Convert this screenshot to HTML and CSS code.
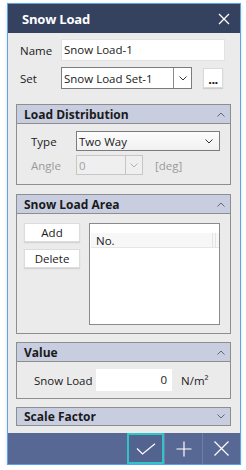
FILE: index.html
```html
<!DOCTYPE html>
<html>
<head>
<meta charset="utf-8">
<link rel="stylesheet" href="styles.css">
</head>
<body>
<div class="window">
  <div class="titlebar">
    <span class="title">Snow Load</span>
    <svg class="close" width="12" height="12" viewBox="0 0 12 12"><path d="M1 1L11 11M11 1L1 11" stroke="#fff" stroke-width="1.3" fill="none"/></svg>
  </div>
  <div class="content">
    <div class="row name-row">
      <span class="lbl">Name</span>
      <div class="textbox">Snow Load-1</div>
    </div>
    <div class="row set-row">
      <span class="lbl">Set</span>
      <div class="combo set-combo"><span class="combo-text">Snow Load Set-1</span><span class="combo-btn"><svg width="8" height="5" viewBox="0 0 8 5"><path d="M0.5 0.5L4 4L7.5 0.5" stroke="#333" fill="none"/></svg></span></div>
      <div class="dots">...</div>
    </div>

    <div class="panel">
      <div class="phead"><span>Load Distribution</span><svg class="chev" width="8" height="5" viewBox="0 0 8 5"><path d="M0.5 4.5L4 1L7.5 4.5" stroke="#666" fill="none"/></svg></div>
      <div class="pbody dist">
        <div class="drow">
          <span class="dlbl">Type</span>
          <div class="combo type-combo"><span class="combo-text">Two Way</span><svg class="arrow" width="8" height="5" viewBox="0 0 8 5"><path d="M0.5 0.5L4 4L7.5 0.5" stroke="#333" fill="none"/></svg></div>
        </div>
        <div class="drow">
          <span class="dlbl dis">Angle</span>
          <div class="combo angle-combo"><span class="combo-text">0</span><span class="combo-btn dbtn"><svg width="8" height="5" viewBox="0 0 8 5"><path d="M0.5 0.5L4 4L7.5 0.5" stroke="#b0b0b0" fill="none"/></svg></span></div>
          <span class="unit dis">[deg]</span>
        </div>
      </div>
    </div>

    <div class="panel">
      <div class="phead"><span>Snow Load Area</span><svg class="chev" width="8" height="5" viewBox="0 0 8 5"><path d="M0.5 4.5L4 1L7.5 4.5" stroke="#666" fill="none"/></svg></div>
      <div class="pbody area">
        <div class="btns">
          <div class="btn">Add</div>
          <div class="btn">Delete</div>
        </div>
        <div class="list">
          <div class="lhead"><span class="lcol">No.</span><span class="lrest"></span></div>
        </div>
      </div>
    </div>

    <div class="panel">
      <div class="phead"><span>Value</span><svg class="chev" width="8" height="5" viewBox="0 0 8 5"><path d="M0.5 4.5L4 1L7.5 4.5" stroke="#666" fill="none"/></svg></div>
      <div class="pbody val">
        <span class="vlbl">Snow Load</span>
        <div class="numbox">0</div>
        <span class="unit">N/m²</span>
      </div>
    </div>

    <div class="panel collapsed">
      <div class="phead"><span>Scale Factor</span><svg class="chev" width="8" height="5" viewBox="0 0 8 5"><path d="M0.5 0.5L4 4L7.5 0.5" stroke="#666" fill="none"/></svg></div>
    </div>
  </div>
  <div class="footer">
    <div class="fbtn ok"><svg width="20" height="12" viewBox="0 0 20 12"><path d="M1 5.5L6.5 11L19 0.8" stroke="#fff" stroke-width="1.2" fill="none"/></svg></div>
    <div class="fbtn"><svg width="16" height="16" viewBox="0 0 16 16"><path d="M8 0.5V15.5M0.5 8H15.5" stroke="#fff" stroke-width="1.2" fill="none"/></svg></div>
    <div class="fbtn last"><svg width="15" height="15" viewBox="0 0 15 15"><path d="M0.5 0.5L14.5 14.5M14.5 0.5L0.5 14.5" stroke="#fff" stroke-width="1.2" fill="none"/></svg></div>
  </div>
</div>
</body>
</html>
```
FILE: styles.css
```css
* { box-sizing: border-box; }
body {
  margin: 0;
  background: #ffffff;
  font-family: "Open Sans", "Noto Sans", sans-serif;
  font-size: 11.5px;
  color: #1a1a1a;
}
.window {
  margin: 3px 0 0 7px;
  width: 234px;
  height: 462px;
  border: 1px solid #5aa2ec;
  display: flex;
  flex-direction: column;
  box-shadow: 0 1px 4px rgba(0,0,0,0.12);
}
.titlebar {
  height: 29px;
  background: #34415f;
  color: #fff;
  display: flex;
  align-items: center;
  justify-content: space-between;
  padding: 0 10px 0 14px;
  flex: none;
}
.title { font-weight: bold; font-size: 13px; letter-spacing: -0.2px; }
.close { display: block; }
.content {
  flex: 1;
  background: #ebebeb;
  padding: 6px 8px 0 8px;
  display: flex;
  flex-direction: column;
}
.row { display: flex; align-items: center; }
.lbl { width: 45px; padding-left: 4px; }
.name-row { height: 22px; }
.set-row { height: 22px; margin-top: 6px; }
.textbox {
  width: 164px;
  height: 22px;
  background: #fff;
  border: 1px solid #e2e2e2;
  padding: 0 0 0 2px;
  line-height: 20px;
}
.combo {
  display: flex;
  align-items: center;
  background: #fff;
  border: 1px solid #7c7c7c;
}
.combo-text { flex: 1; padding-left: 2px; white-space: nowrap; overflow: hidden; }
.combo-btn {
  height: 100%;
  display: flex;
  align-items: center;
  justify-content: center;
  border-left: 1px solid #8a8a8a;
}
.set-combo { width: 131px; height: 22px; }
.set-combo .combo-btn { width: 18px; }
.dots {
  margin-left: 11px;
  width: 20px;
  height: 20px;
  background: #fff;
  border: 1px solid #dadada;
  box-shadow: 0 1px 1px rgba(0,0,0,0.12);
  text-align: center;
  line-height: 20px;
  font-size: 13px;
  font-weight: bold;
  letter-spacing: -0.5px;
}
.panel {
  width: 215px;
  border: 1px solid #8e8e8e;
  background: #ebebeb;
}
.content > .panel:nth-child(3) { margin-top: 15px; }
.content > .panel:nth-child(4) { margin-top: 9px; }
.content > .panel:nth-child(5) { margin-top: 8px; }
.content > .panel:nth-child(6) { margin-top: 8px; }
.phead {
  height: 19px;
  background: #c8cee0;
  border-bottom: 1px solid #8e8e8e;
  display: flex;
  align-items: center;
  justify-content: space-between;
  padding: 0 5px 0 7px;
  font-weight: bold;
  font-size: 12px;
}
.collapsed .phead { border-bottom: none; height: 17px; }
.chev { display: block; }
.dist { height: 60px; padding: 7px 0 0 14px; }
.drow { display: flex; align-items: center; height: 20px; margin-bottom: 4px; }
.dlbl { width: 45px; }
.dis { color: #9a9a9a; }
.type-combo { width: 144px; height: 20px; background: linear-gradient(#fdfdfd, #f0f0f0); padding-right: 6px; }
.arrow { display: block; }
.angle-combo { width: 67px; height: 20px; background: #efefef; border-color: #c6c6c6; color: #a0a0a0; }
.angle-combo .combo-btn { width: 17px; border-left-color: #c6c6c6; }
.unit { margin-left: 12px; }
.area { height: 119px; display: flex; padding: 9px 0 0 7px; }
.btns { display: flex; flex-direction: column; gap: 7px; width: 56px; }
.btn {
  height: 19px;
  background: #fff;
  border: 1px solid #dcdcdc;
  box-shadow: 0 1px 1px rgba(0,0,0,0.1);
  text-align: center;
  line-height: 17px;
}
.list {
  margin-left: 9px;
  width: 131px;
  height: 102px;
  background: #fff;
  border: 1px solid #8a8a8a;
  padding: 9px 0 0 1px;
}
.lhead { display: flex; height: 15px; border-bottom: 1px solid #e6e6e6; background: #f7f7f7; }
.lcol { width: 122px; padding-left: 5px; line-height: 15px; border-right: 1px solid #e4e4e4; }
.lrest { width: 3px; border-right: 1px solid #e4e4e4; }
.val { height: 36px; display: flex; align-items: center; padding-left: 17px; }
.vlbl { width: 62px; }
.numbox {
  width: 76px;
  height: 22px;
  background: #fff;
  text-align: right;
  padding-right: 5px;
  line-height: 22px;
}
.val .unit { margin-left: 9px; }
.footer {
  height: 31px;
  background: #576894;
  display: flex;
  justify-content: flex-end;
  flex: none;
}
.fbtn {
  width: 38px;
  display: flex;
  align-items: center;
  justify-content: center;
  border-left: 1px solid #6e7ea6;
}
.fbtn.ok { width: 37px; border: 2px solid #2ec4c8; background: #536390; }
.fbtn.last { width: 38px; }
```
